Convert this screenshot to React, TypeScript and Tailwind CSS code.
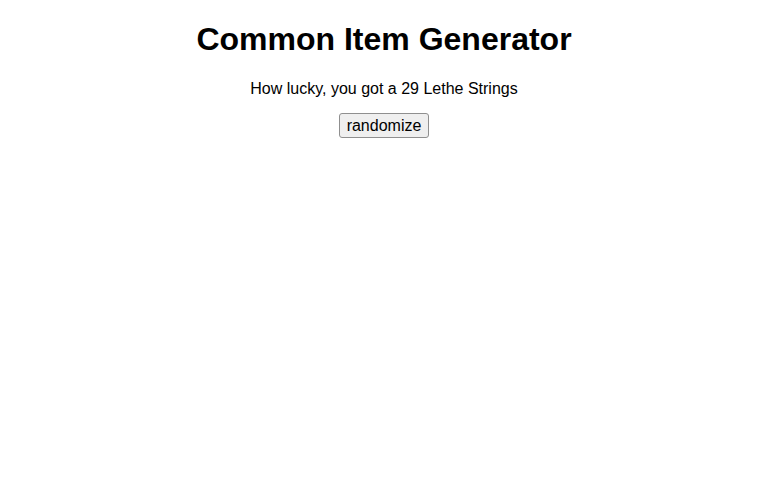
import React, { useState } from 'react';

const ITEMS = ['Lethe Strings', 'Iron Shards', 'Moss Bundles', 'Copper Rings', 'Ashen Feathers'];

export default function App() {
  const [count, setCount] = useState(29);
  const [item, setItem] = useState('Lethe Strings');

  const randomize = () => {
    setCount(Math.floor(Math.random() * 50) + 1);
    setItem(ITEMS[Math.floor(Math.random() * ITEMS.length)]);
  };

  return (
    <div className="min-h-[480px] bg-white text-center text-black font-['Liberation_Sans',Arial,sans-serif]">
      <h1 className="pt-[21px] mb-[22px] text-[32px] leading-[37px] font-bold">Common Item Generator</h1>
      <p className="text-base leading-[18px]">
        How lucky, you got a {count} {item}
      </p>
      <button
        onClick={randomize}
        className="mt-[15px] px-[7px] pt-[3px] pb-[2px] text-base leading-[18px] bg-[#efefef] border border-[#8f8f8f] rounded-[3px] text-black"
      >
        randomize
      </button>
    </div>
  );
}
